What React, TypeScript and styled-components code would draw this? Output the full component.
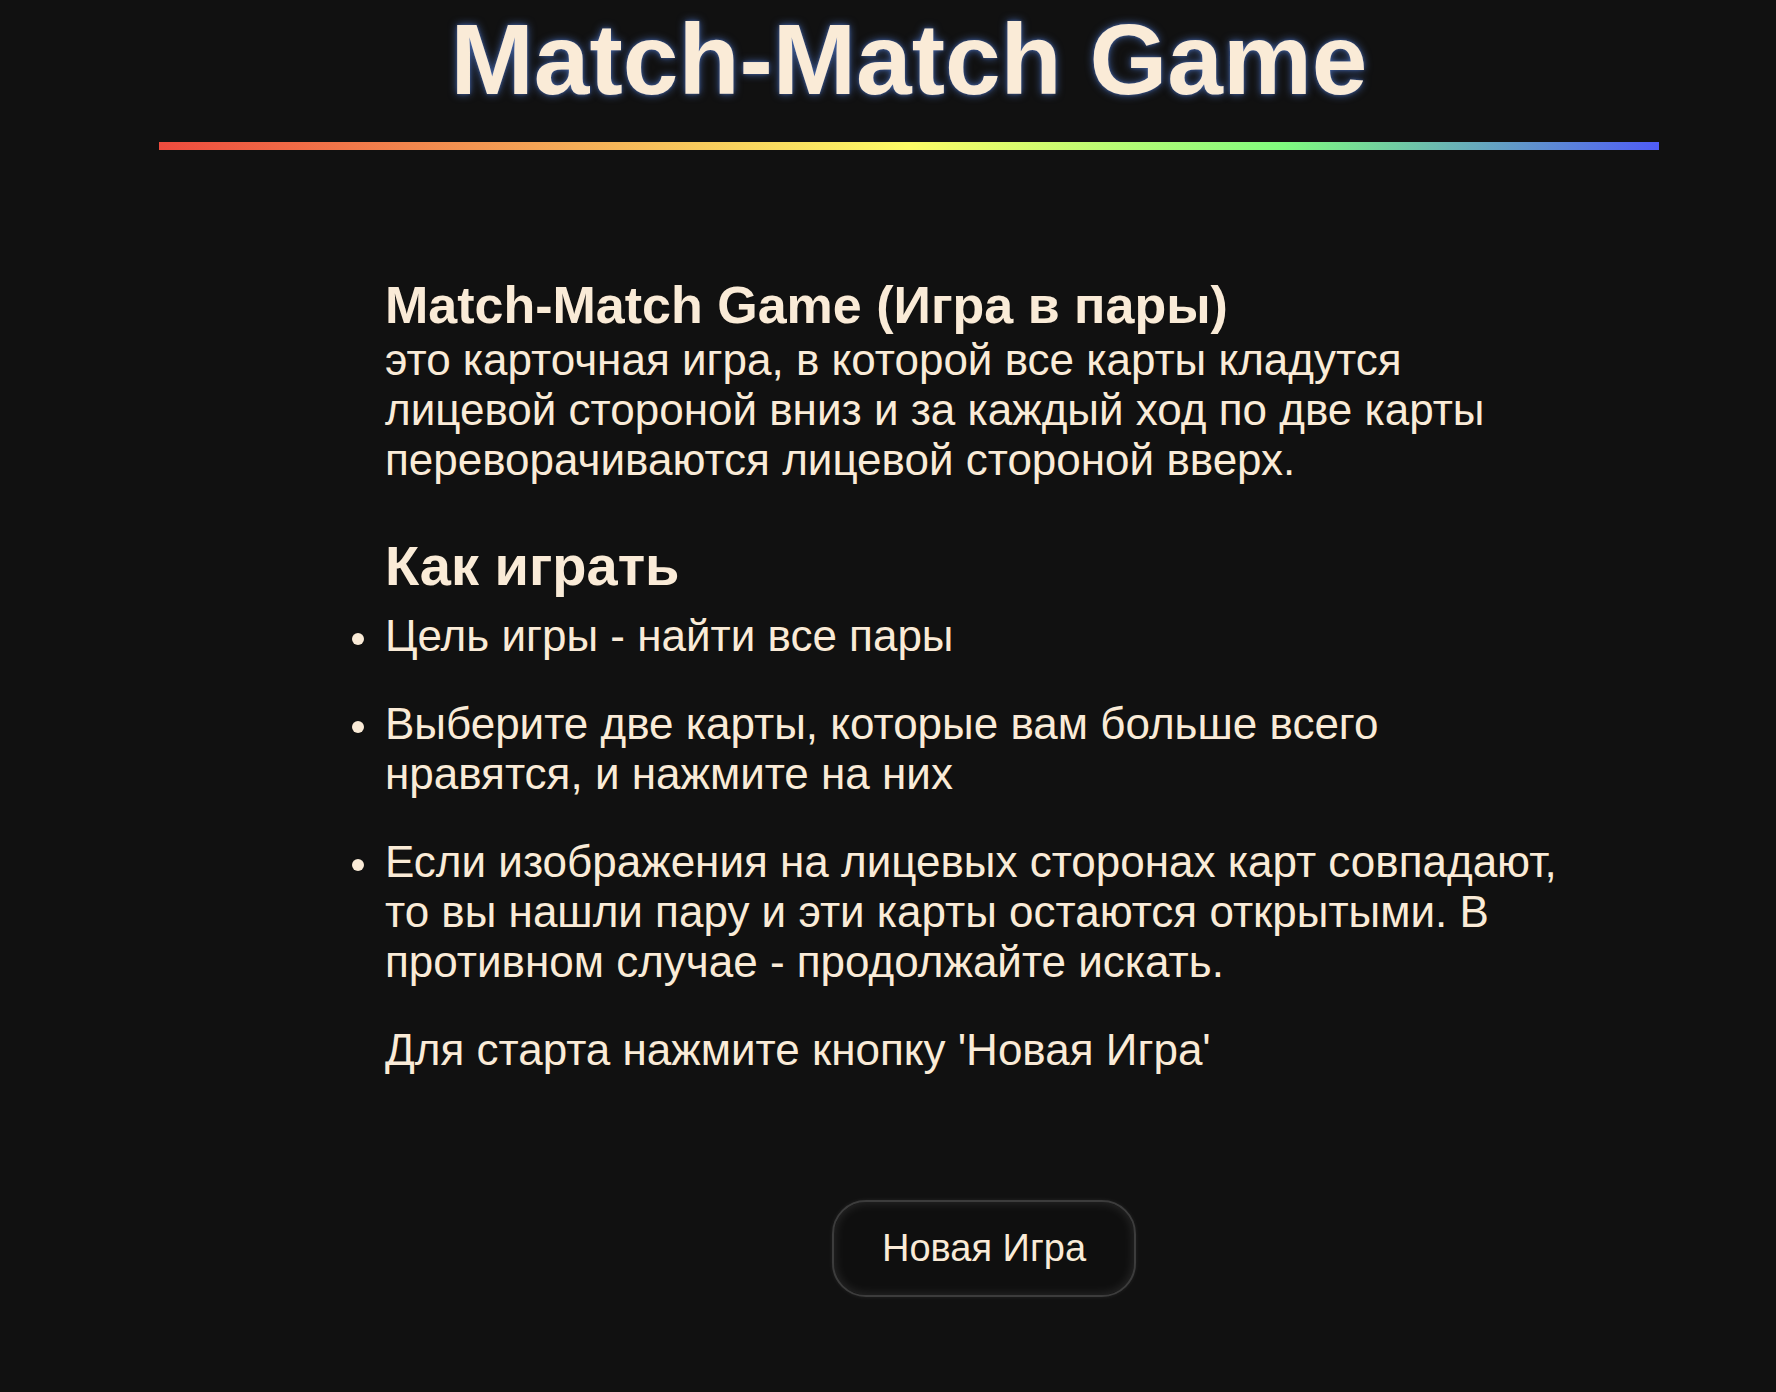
import React from 'react';
import styled, {createGlobalStyle} from 'styled-components';

const GlobalStyle = createGlobalStyle`
  html, body {
    margin: 0;
    padding: 0;
    background-color: #111111;
  }

  body {
    font-family: "Liberation Sans", Arial, sans-serif;
    color: antiquewhite;
  }
`;

const rules = [
  'Цель игры - найти все пары',
  'Выберите две карты, которые вам больше всего нравятся, и нажмите на них',
  'Если изображения на лицевых сторонах карт совпадают, то вы нашли пару и эти карты остаются открытыми. В противном случае - продолжайте искать.',
];

const App: React.FC = () => {
  return (
      <>
        <GlobalStyle/>
        <Page>
          <Header>
            <Title>Match-Match Game</Title>
            <RainbowLine/>
          </Header>
          <About>
            <AboutHeading>Match-Match Game (Игра в пары)</AboutHeading>
            <Paragraph>
              это карточная игра, в которой все карты кладутся лицевой стороной вниз и за каждый ход по две
              карты переворачиваются лицевой стороной вверх.
            </Paragraph>
            <RulesHeading>Как играть</RulesHeading>
            <RulesList>
              {rules.map((text) => (
                  <RuleItem key={text}>
                    <Dot/>
                    <RuleText>{text}</RuleText>
                  </RuleItem>
              ))}
              <RuleItem>
                <RuleText>Для старта нажмите кнопку 'Новая Игра'</RuleText>
              </RuleItem>
            </RulesList>
            <ButtonRow>
              <NewGameButton>Новая Игра</NewGameButton>
            </ButtonRow>
          </About>
        </Page>
      </>
  );
};

const Page = styled.div`
  width: 1500px;
  margin-left: 159px;
  padding-top: 2px;
  padding-bottom: 80px;
`;

const Header = styled.header`
  display: flex;
  flex-direction: column;
  align-items: center;
`;

const Title = styled.h1`
  margin: 0;
  font-size: 100px;
  font-weight: 700;
  line-height: 115px;
  color: antiquewhite;
  text-shadow: 0 0 8px rgba(80, 120, 200, 0.8), 0 0 3px rgba(60, 90, 160, 0.6);
`;

const RainbowLine = styled.div`
  width: 100%;
  height: 8px;
  margin-top: 25px;
  background: linear-gradient(90deg, #ee4b3e 0%, #f4a355 25%, #fdfc66 50%, #7ffb7f 75%, #4f5cf7 100%);
`;

const About = styled.section`
  width: 1198px;
  margin-left: 226px;
  margin-top: 125px;
  display: flex;
  flex-direction: column;
`;

const AboutHeading = styled.h3`
  margin: 0;
  font-size: 52px;
  font-weight: 700;
`;

const Paragraph = styled.p`
  margin: 0;
  max-width: 1184px;
  font-size: 44px;
  line-height: 50px;
`;

const RulesHeading = styled.h2`
  margin: 48px 0 13px;
  font-size: 56px;
  font-weight: 700;
`;

const RulesList = styled.ul`
  margin: 0;
  padding: 0;
  list-style: none;
  display: flex;
  flex-direction: column;
  gap: 38px;
`;

const RuleItem = styled.li`
  display: flex;
  align-items: flex-start;
`;

const Dot = styled.span`
  flex: none;
  width: 12px;
  height: 12px;
  margin: 22px 21px 0 -33px;
  border-radius: 50%;
  background-color: antiquewhite;
`;

const RuleText = styled.span`
  max-width: 1184px;
  font-size: 44px;
  line-height: 50px;
`;

const ButtonRow = styled.div`
  display: flex;
  justify-content: center;
  margin-top: 125px;
`;

const NewGameButton = styled.button`
  width: 304px;
  height: 97px;
  border: 2px solid #3c3c3c;
  border-radius: 34px;
  background-color: #0f0f0f;
  box-shadow: inset 0 0 12px rgba(255, 255, 255, 0.12), 0 0 4px rgba(255, 255, 255, 0.08);
  font-family: "Liberation Sans", Arial, sans-serif;
  font-size: 38px;
  color: antiquewhite;
  cursor: pointer;
`;

export default App;
